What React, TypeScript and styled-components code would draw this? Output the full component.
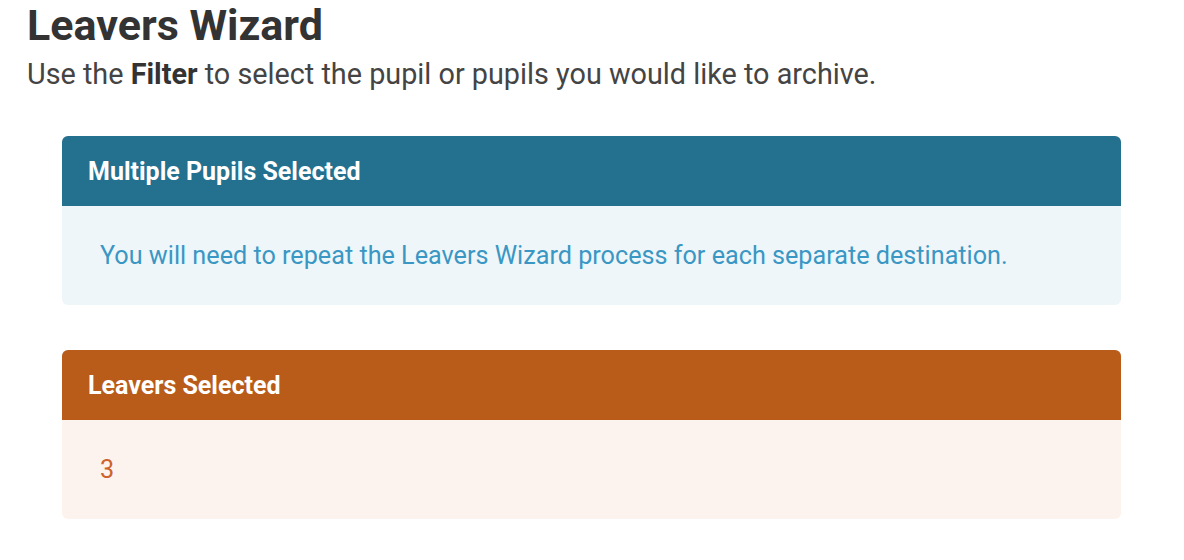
import React from "react";
import styled, { createGlobalStyle } from "styled-components";

const GlobalStyle = createGlobalStyle`
  html, body {
    margin: 0;
    padding: 0;
    background: #ffffff;
    font-family: Roboto, "Liberation Sans", sans-serif;
  }
`;

const Page = styled.div`
  padding: 0 63px 0 27px;
  box-sizing: border-box;
  width: 1184px;
`;

const Title = styled.h1`
  margin: 0;
  font-size: 43px;
  line-height: 50px;
  font-weight: 700;
  color: #333333;
`;

const Lead = styled.p`
  margin: 6px 0 0;
  font-size: 28.8px;
  line-height: 36px;
  font-weight: 400;
  color: #444444;

  strong {
    font-weight: 700;
    color: #333333;
  }
`;

const Panels = styled.div`
  display: flex;
  flex-direction: column;
  gap: 45px;
  margin: 44px 0 0 35px;
`;

type Tone = "info" | "warning";

const tones: Record<Tone, { head: string; body: string; text: string }> = {
  info: { head: "#24708f", body: "#eef6f9", text: "#3a97c4" },
  warning: { head: "#b95b19", body: "#fcf3ee", text: "#cd622b" },
};

const Panel = styled.section<{ $tone: Tone }>`
  border-radius: 6px;
  overflow: hidden;
  background: ${(p) => tones[p.$tone].body};
`;

const PanelHead = styled.div<{ $tone: Tone }>`
  background: ${(p) => tones[p.$tone].head};
  color: #ffffff;
  height: 70px;
  display: flex;
  align-items: center;
  padding: 0 26px;
  font-size: 25px;
  font-weight: 700;
`;

const PanelBody = styled.div<{ $tone: Tone }>`
  color: ${(p) => tones[p.$tone].text};
  height: 99px;
  display: flex;
  align-items: center;
  padding: 0 38px;
  font-size: 25.2px;
  font-weight: 400;
`;

const App: React.FC = () => {
  return (
    <>
      <GlobalStyle />
      <Page>
        <Title>Leavers Wizard</Title>
        <Lead>
          Use the <strong>Filter</strong> to select the pupil or pupils you would like to archive.
        </Lead>
        <Panels>
          <Panel $tone="info">
            <PanelHead $tone="info">Multiple Pupils Selected</PanelHead>
            <PanelBody $tone="info">
              You will need to repeat the Leavers Wizard process for each separate destination.
            </PanelBody>
          </Panel>
          <Panel $tone="warning">
            <PanelHead $tone="warning">Leavers Selected</PanelHead>
            <PanelBody $tone="warning">3</PanelBody>
          </Panel>
        </Panels>
      </Page>
    </>
  );
};

export default App;
